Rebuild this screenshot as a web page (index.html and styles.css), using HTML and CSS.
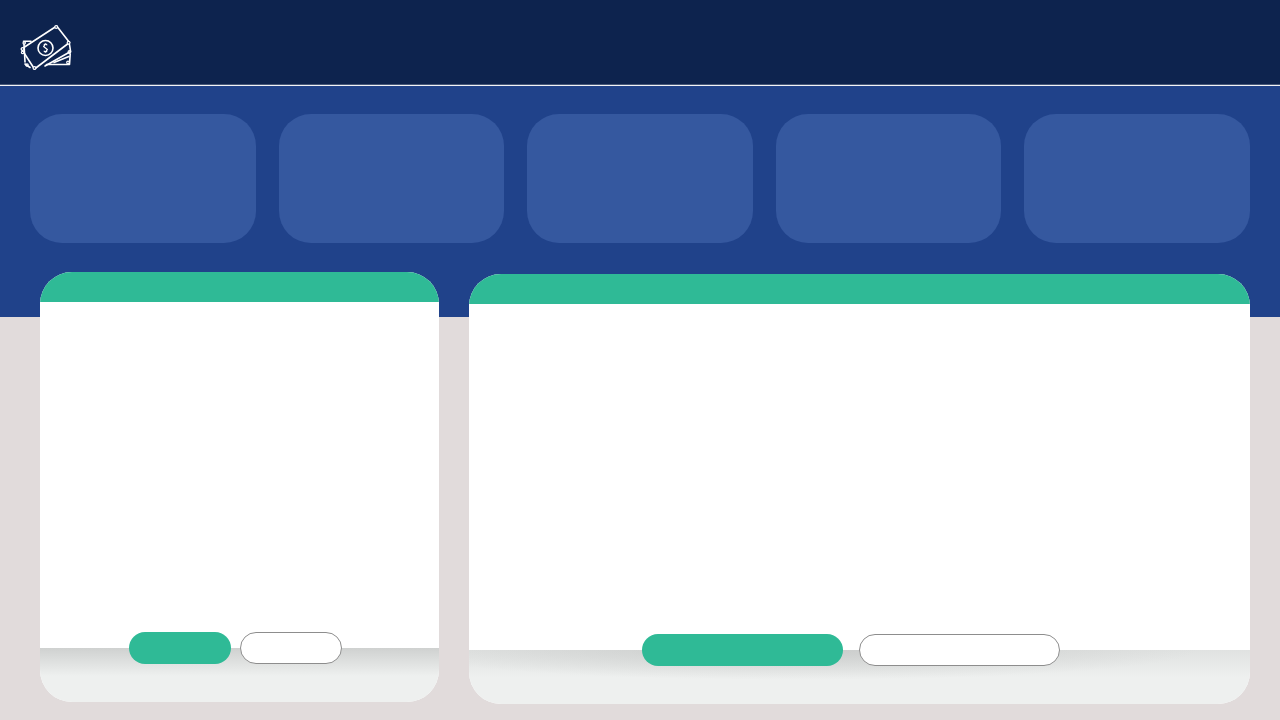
FILE: index.html
```html
<!DOCTYPE html>
<html lang="en">
<head>
<meta charset="utf-8">
<title>Dashboard</title>
<link rel="stylesheet" href="styles.css">
</head>
<body>
<header class="topbar">
  <svg class="logo" viewBox="0 0 54 50" width="54" height="50" fill="none" stroke="#fff" stroke-width="1.6" stroke-linejoin="round" stroke-linecap="round" aria-hidden="true">
    <path d="M37.7 3 L50.5 19.5 L15.5 46 L2.5 26 Z"/>
    <g fill="#0c2350" stroke-width="1.2">
      <circle cx="37.2" cy="4" r="1.4"/>
      <circle cx="49.6" cy="19.8" r="1.4"/>
      <circle cx="15.5" cy="45" r="1.4"/>
      <circle cx="3.6" cy="26" r="1.4"/>
      <circle cx="50.4" cy="29" r="1.3"/>
      <circle cx="49" cy="39.5" r="1.3"/>
      <circle cx="3.6" cy="29.5" r="1.2"/>
      <circle cx="5.2" cy="20" r="1.2"/>
      <circle cx="8" cy="42" r="1.2"/>
    </g>
    <circle cx="26.5" cy="25" r="7.5"/>
    <path d="M26.5 20.8 L24.6 23.6 L28.4 26.4 L26.5 29.2 M25.2 21.8 L26.5 20.8 L27.8 21.8 M25.2 28.2 L26.5 29.2 L27.8 28.2" stroke-width="1.2"/>
    <path d="M50.5 21.5 L51.6 28.5 L26 43"/>
    <path d="M51.2 31 L50.5 41.5 L27.5 41.5"/>
    <path d="M49.8 33.5 L35 39.5"/>
    <path d="M4.5 18.3 L12 18.3 M5 21 L6 39 M6 41 L11 44.5"/>
  </svg>
</header>
<section class="hero">
  <div class="tile"></div>
  <div class="tile"></div>
  <div class="tile"></div>
  <div class="tile"></div>
  <div class="tile"></div>
</section>
<main class="panels">
  <article class="card card-small">
    <div class="card-head"></div>
    <div class="card-body"></div>
    <div class="card-foot">
      <button class="btn btn-primary" type="button"></button>
      <button class="btn btn-outline" type="button"></button>
    </div>
  </article>
  <article class="card card-wide">
    <div class="card-head"></div>
    <div class="card-body"></div>
    <div class="card-foot card-foot-wide">
      <button class="btn btn-primary" type="button"></button>
      <button class="btn btn-outline" type="button"></button>
    </div>
  </article>
</main>
</body>
</html>
```
FILE: styles.css
```css
* { box-sizing: border-box; }
html, body { margin: 0; height: 720px; overflow: hidden; }
body { background: #e1dbdb; font-family: "Liberation Sans", Arial, sans-serif; }

.topbar {
  height: 86px;
  padding: 23px 0 0 19px;
  background: #0d234e;
  border-bottom: 1px solid #f2f3f6;
  box-shadow: inset 0 -1px 0 rgba(255, 255, 255, .25);
}
.logo { display: block; }

.hero {
  height: 231px;
  padding: 28px 30px 0;
  background: #20428a;
  display: grid;
  grid-template-columns: repeat(5, 1fr);
  column-gap: 22.75px;
  align-items: start;
}
.tile {
  height: 129px;
  border-radius: 32px;
  background: #35589f;
}

.panels {
  display: flex;
  align-items: flex-start;
  gap: 30px;
  margin-top: -45px;
  padding: 0 30px 0 40px;
}
.card {
  height: 430px;
  border-radius: 32px;
  overflow: hidden;
  display: flex;
  flex-direction: column;
  background: #fff;
}
.card-small { width: 399px; flex: none; }
.card-wide { flex: 1; margin-top: 2px; }
.card-head { height: 30px; background: #2fba96; }
.card-body { height: 346px; background: #fff; }
.card-foot {
  flex: 1;
  display: flex;
  justify-content: center;
  align-items: flex-start;
  gap: 9px;
  padding-right: 8px;
  background: linear-gradient(#cfd1d0 0, #eef0ef 28px);
}
.card-foot-wide {
  gap: 16px;
  padding-right: 17px;
  background:
    radial-gradient(ellipse 400px 30px at 42% 0, rgba(190,192,191,.65), rgba(190,192,191,0)),
    linear-gradient(#e0e2e1 0, #eef0ef 28px);
}
.btn {
  display: block;
  height: 32px;
  width: 102px;
  margin: -16px 0 0;
  padding: 0;
  border-radius: 16px;
  border: 0;
}
.card-foot-wide .btn { width: 201px; }
.btn-primary { background: #2fba96; }
.btn-outline { background: #fff; border: 1px solid #8d8d8d; }
```
